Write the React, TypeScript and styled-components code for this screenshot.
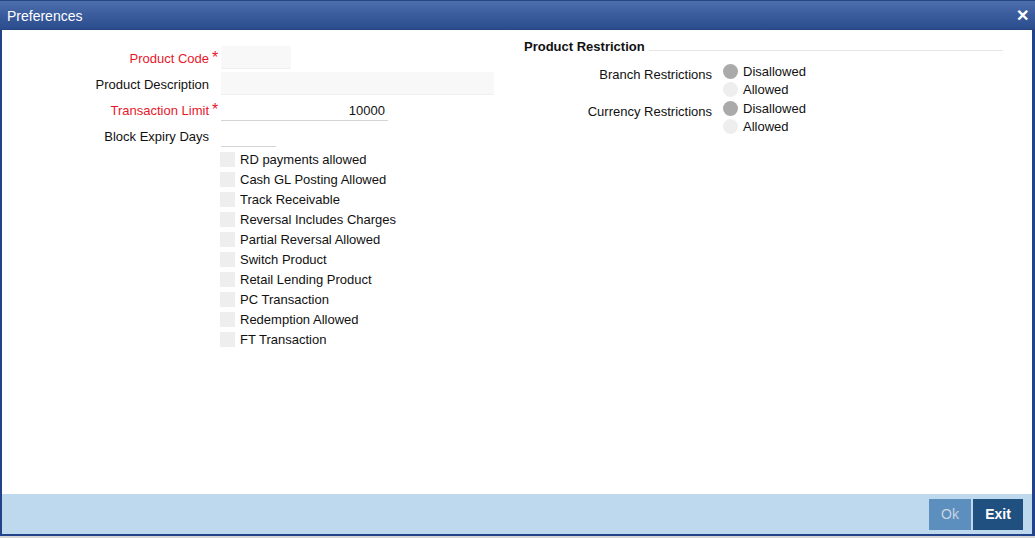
import React from "react";
import styled, { createGlobalStyle } from "styled-components";

const GlobalStyle = createGlobalStyle`
  html, body { margin: 0; padding: 0; background: #d6d6d6; }
  body { font-family: "Liberation Sans", Arial, sans-serif; font-size: 13px; color: #111; }
  * { box-sizing: border-box; }
`;

const Window = styled.div`
  width: 1035px;
  height: 536px;
  display: flex;
  flex-direction: column;
  background: #fff;
  border-left: 2px solid #22438a;
  border-right: 3px solid #22438a;
  border-bottom: 2px solid #22438a;
`;

const TitleBar = styled.div`
  height: 30px;
  margin: 0 -3px 0 -2px;
  display: flex;
  align-items: center;
  justify-content: space-between;
  padding: 1px 6px 0 7px;
  background: linear-gradient(#4d6fae, #3a5c9c 50%, #2c4d8d);
  border-top: 1px solid #27457f;
  border-bottom: 1px solid #27457f;
  color: #fff;
  font-size: 14px;
`;

const Close = styled.span`
  font-size: 16px;
  font-weight: bold;
  line-height: 1;
  color: #fff;
`;

const Body = styled.div`
  flex: 1;
  display: flex;
`;

const LeftCol = styled.div`
  width: 522px;
  padding-top: 16px;
`;

const FormGrid = styled.div`
  display: grid;
  grid-template-columns: 207px 12px auto;
  grid-auto-rows: 23px;
  row-gap: 3px;
  align-items: center;
`;

const Label = styled.label<{ $required?: boolean }>`
  text-align: right;
  padding-top: 2px;
  color: ${(p) => (p.$required ? "#e8172a" : "#111")};
`;

const Star = styled.span`
  color: #e8172a;
  font-size: 16px;
  line-height: 16px;
  align-self: start;
  padding: 4px 0 0 3px;
`;

const Field = styled.input<{ $w: number; $plain?: boolean; $right?: boolean }>`
  width: ${(p) => p.$w}px;
  height: 23px;
  border: none;
  outline: none;
  border-bottom: 1px solid ${(p) => (p.$plain ? "#d4d4d4" : "#f0f0f0")};
  background: ${(p) => (p.$plain ? "#fff" : "#f8f8f8")};
  font: inherit;
  color: #111;
  text-align: ${(p) => (p.$right ? "right" : "left")};
  padding: 2px 3px 0;
`;

const Checks = styled.div`
  margin: 2px 0 0 218px;
  display: flex;
  flex-direction: column;
`;

const CheckRow = styled.label`
  height: 20px;
  display: flex;
  align-items: center;
  gap: 5px;
`;

const Box = styled.span`
  width: 15px;
  height: 15px;
  background: #eeeeee;
  display: inline-block;
`;

const RightCol = styled.div`
  flex: 1;
  padding: 8px 29px 0 0;
`;

const SectionHead = styled.div`
  display: flex;
  align-items: flex-end;
  gap: 4px;
  height: 16px;
`;

const SectionTitle = styled.span`
  font-weight: bold;
  font-size: 13px;
  white-space: nowrap;
`;

const Rule = styled.span`
  flex: 1;
  height: 1px;
  background: #e6e6e6;
  margin-bottom: 3px;
`;

const RadioGroups = styled.div`
  margin-top: 8px;
  display: flex;
  flex-direction: column;
  gap: 1px;
`;

const RadioGroup = styled.div`
  display: grid;
  grid-template-columns: 188px auto;
  column-gap: 11px;
`;

const GroupLabel = styled.span`
  text-align: right;
  padding-top: 5px;
`;

const Options = styled.div`
  display: flex;
  flex-direction: column;
`;

const Option = styled.label`
  height: 18px;
  display: flex;
  align-items: center;
  gap: 5px;
`;

const Dot = styled.span<{ $on?: boolean }>`
  width: 15px;
  height: 15px;
  border-radius: 50%;
  background: ${(p) => (p.$on ? "#aaaaaa" : "#eeeeee")};
`;

const Footer = styled.div`
  height: 40px;
  background: #bed8ed;
  display: flex;
  justify-content: flex-end;
  align-items: center;
  gap: 2px;
  padding-right: 9px;
`;

const Button = styled.button<{ $primary?: boolean }>`
  height: 31px;
  width: ${(p) => (p.$primary ? 50 : 42)}px;
  border: none;
  font-family: inherit;
  font-size: 14px;
  font-weight: ${(p) => (p.$primary ? "bold" : "normal")};
  color: ${(p) => (p.$primary ? "#fff" : "#c9d5e2")};
  background: ${(p) => (p.$primary ? "#1f5080" : "#5c8ebe")};
  padding: 0;
`;

const checks = [
  "RD payments allowed",
  "Cash GL Posting Allowed",
  "Track Receivable",
  "Reversal Includes Charges",
  "Partial Reversal Allowed",
  "Switch Product",
  "Retail Lending Product",
  "PC Transaction",
  "Redemption Allowed",
  "FT Transaction",
];

export default function App() {
  return (
    <>
      <GlobalStyle />
      <Window>
        <TitleBar>
          <span>Preferences</span>
          <Close>✕</Close>
        </TitleBar>
        <Body>
          <LeftCol>
            <FormGrid>
              <Label $required>Product Code</Label>
              <Star>*</Star>
              <Field $w={70} readOnly />
              <Label>Product Description</Label>
              <span />
              <Field $w={273} readOnly />
              <Label $required>Transaction Limit</Label>
              <Star>*</Star>
              <Field $w={167} $plain $right defaultValue="10000" readOnly />
              <Label>Block Expiry Days</Label>
              <span />
              <Field $w={55} $plain readOnly />
            </FormGrid>
            <Checks>
              {checks.map((c) => (
                <CheckRow key={c}>
                  <Box />
                  {c}
                </CheckRow>
              ))}
            </Checks>
          </LeftCol>
          <RightCol>
            <SectionHead>
              <SectionTitle>Product Restriction</SectionTitle>
              <Rule />
            </SectionHead>
            <RadioGroups>
              {["Branch Restrictions", "Currency Restrictions"].map((g) => (
                <RadioGroup key={g}>
                  <GroupLabel>{g}</GroupLabel>
                  <Options>
                    <Option>
                      <Dot $on />
                      Disallowed
                    </Option>
                    <Option>
                      <Dot />
                      Allowed
                    </Option>
                  </Options>
                </RadioGroup>
              ))}
            </RadioGroups>
          </RightCol>
        </Body>
        <Footer>
          <Button>Ok</Button>
          <Button $primary>Exit</Button>
        </Footer>
      </Window>
    </>
  );
}
